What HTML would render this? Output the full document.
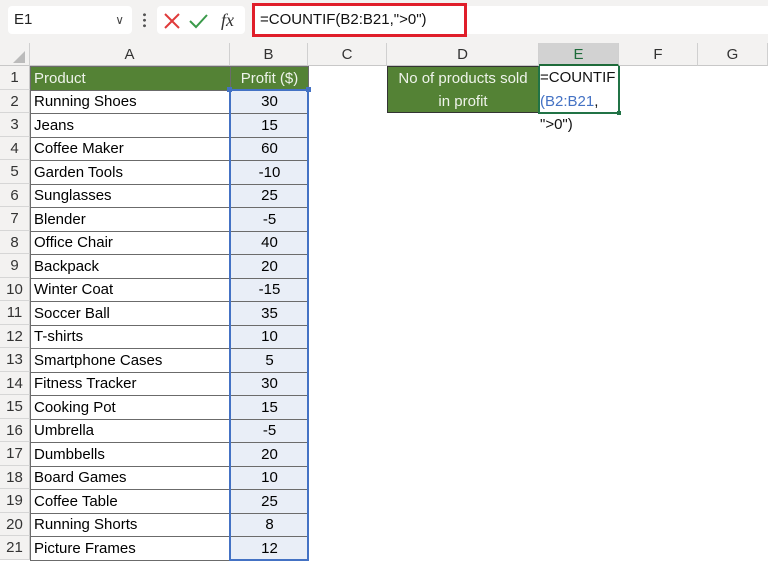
<!DOCTYPE html>
<html><head><meta charset="utf-8"><style>
*{margin:0;padding:0;box-sizing:border-box}
body{width:768px;height:559px;overflow:hidden;background:#fff;font-family:"Liberation Sans",sans-serif;position:relative}
.tb{position:absolute;left:0;top:0;width:768px;height:43px;background:#f3f2f1}
.abs{position:absolute}
.ch{position:absolute;top:43px;height:23px;background:#f3f2f1;border-right:1px solid #d0d0d0;border-bottom:1px solid #c8c8c8;font-size:15px;color:#333;text-align:center;line-height:23px}
.rh{position:absolute;left:0;width:30px;height:23.5px;background:#f3f2f1;border-bottom:1px solid #d6d6d6;border-right:1px solid #c8c8c8;font-size:15px;color:#333;text-align:center;line-height:23px}
table{position:absolute;left:30px;top:66px;border-collapse:collapse;font-size:15px}
td{height:23.5px;border:1px solid #6b6b6b;padding:0 3px;line-height:21px;white-space:nowrap}
td.a{width:200px}
td.b{width:78px;text-align:center;background:#e9eef7}
tr.h td{background:#548235;color:#eef3ea}
</style></head><body>
<div class="tb"></div>
<div class="abs" style="left:8px;top:6px;width:124px;height:28px;background:#fff;border-radius:4px;font-size:15px;line-height:28px;padding-left:6px;color:#222">E1<span style="position:absolute;right:8px;top:0;font-size:12px;color:#444">&#x2228;</span></div>
<div class="abs" style="left:143px;top:12px;width:3px;height:16px;background:radial-gradient(circle,#555 1.3px,transparent 1.6px) 0 0/3px 5.5px"></div>
<div class="abs" style="left:157px;top:6px;width:88px;height:28px;background:#fff;border-radius:4px"></div>
<svg class="abs" style="left:163px;top:11px" width="80" height="20"><path d="M2 3L16 17M16 3L2 17" stroke="#e03a3a" stroke-width="2"/><path d="M27 10L33 16L44 4" stroke="#3a9a4a" stroke-width="2" fill="none"/><text x="58" y="15" font-family="Liberation Serif" font-style="italic" font-size="18" fill="#333">fx</text></svg>
<div class="abs" style="left:252px;top:3px;width:215px;height:34px;background:#fff;border:3px solid #e01e2a;font-size:15px;line-height:28px;padding-left:5px;color:#111">=COUNTIF(B2:B21,"&gt;0")</div>
<div class="abs" style="left:467px;top:6px;width:301px;height:28px;background:#fff"></div>
<div class="ch" style="left:0;width:30px"></div>
<svg class="abs" style="left:12px;top:50px" width="14" height="14"><path d="M13 1L13 13L1 13Z" fill="#bbb"/></svg>
<div class="ch" style="left:30px;width:200px">A</div>
<div class="ch" style="left:230px;width:78px">B</div>
<div class="ch" style="left:308px;width:79px">C</div>
<div class="ch" style="left:387px;width:152px">D</div>
<div class="ch" style="left:539px;width:80px;background:#d2d2d2;color:#1e6b3a;border-bottom:2px solid #1e6b3a">E</div>
<div class="ch" style="left:619px;width:79px">F</div>
<div class="ch" style="left:698px;width:70px">G</div>
<div class="rh" style="top:66px">1</div><div class="rh" style="top:89.5px">2</div><div class="rh" style="top:113px">3</div><div class="rh" style="top:136.5px">4</div><div class="rh" style="top:160px">5</div><div class="rh" style="top:183.5px">6</div><div class="rh" style="top:207px">7</div><div class="rh" style="top:230.5px">8</div><div class="rh" style="top:254px">9</div><div class="rh" style="top:277.5px">10</div><div class="rh" style="top:301px">11</div><div class="rh" style="top:324.5px">12</div><div class="rh" style="top:348px">13</div><div class="rh" style="top:371.5px">14</div><div class="rh" style="top:395px">15</div><div class="rh" style="top:418.5px">16</div><div class="rh" style="top:442px">17</div><div class="rh" style="top:465.5px">18</div><div class="rh" style="top:489px">19</div><div class="rh" style="top:512.5px">20</div><div class="rh" style="top:536px">21</div>
<table>
<tr class="h"><td class="a">Product</td><td class="b" style="background:#548235">Profit ($)</td></tr>
<tr><td class="a">Running Shoes</td><td class="b">30</td></tr>
<tr><td class="a">Jeans</td><td class="b">15</td></tr>
<tr><td class="a">Coffee Maker</td><td class="b">60</td></tr>
<tr><td class="a">Garden Tools</td><td class="b">-10</td></tr>
<tr><td class="a">Sunglasses</td><td class="b">25</td></tr>
<tr><td class="a">Blender</td><td class="b">-5</td></tr>
<tr><td class="a">Office Chair</td><td class="b">40</td></tr>
<tr><td class="a">Backpack</td><td class="b">20</td></tr>
<tr><td class="a">Winter Coat</td><td class="b">-15</td></tr>
<tr><td class="a">Soccer Ball</td><td class="b">35</td></tr>
<tr><td class="a">T-shirts</td><td class="b">10</td></tr>
<tr><td class="a">Smartphone Cases</td><td class="b">5</td></tr>
<tr><td class="a">Fitness Tracker</td><td class="b">30</td></tr>
<tr><td class="a">Cooking Pot</td><td class="b">15</td></tr>
<tr><td class="a">Umbrella</td><td class="b">-5</td></tr>
<tr><td class="a">Dumbbells</td><td class="b">20</td></tr>
<tr><td class="a">Board Games</td><td class="b">10</td></tr>
<tr><td class="a">Coffee Table</td><td class="b">25</td></tr>
<tr><td class="a">Running Shorts</td><td class="b">8</td></tr>
<tr><td class="a">Picture Frames</td><td class="b">12</td></tr>
</table>
<div class="abs" style="left:229px;top:89px;width:80px;height:472px;border:2px solid #4472c4"></div>
<div class="abs" style="left:227px;top:87px;width:5px;height:5px;background:#4472c4"></div>
<div class="abs" style="left:306px;top:87px;width:5px;height:5px;background:#4472c4"></div>
<div class="abs" style="left:387px;top:66px;width:152px;height:47px;background:#548235;border:1px solid #333;color:#eef3ea;font-size:15px;text-align:center;line-height:23px">No of products sold<br>in profit</div>
<div class="abs" style="left:538px;top:66px;width:82px;height:48px;border:2px solid #217346;border-top:none"></div>
<div class="abs" style="left:617px;top:111px;width:4px;height:4px;background:#217346"></div>
<div class="abs" style="left:540px;top:66px;font-size:15px;line-height:23.5px;color:#111">=COUNTIF<br><span style="color:#4472c4">(B2:B21</span>,<br>"&gt;0")</div>
</body></html>
